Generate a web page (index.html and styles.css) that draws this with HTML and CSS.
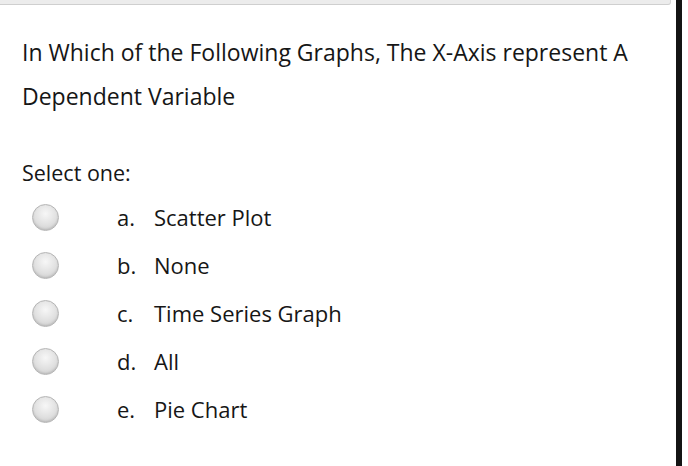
FILE: index.html
```html
<!DOCTYPE html>
<html>
<head>
<meta charset="utf-8">
<link rel="stylesheet" href="styles.css">
</head>
<body>
<div class="page">
  <div class="main">
    <div class="topbar"></div>
    <div class="content">
      <p class="question">In Which of the Following Graphs, The X-Axis represent A Dependent Variable</p>
      <p class="prompt">Select one:</p>
      <ul class="answers">
        <li class="answer"><span class="radio"></span><span class="letter">a.</span><span class="label">Scatter Plot</span></li>
        <li class="answer"><span class="radio"></span><span class="letter">b.</span><span class="label">None</span></li>
        <li class="answer"><span class="radio"></span><span class="letter">c.</span><span class="label">Time Series Graph</span></li>
        <li class="answer"><span class="radio"></span><span class="letter">d.</span><span class="label">All</span></li>
        <li class="answer"><span class="radio"></span><span class="letter">e.</span><span class="label">Pie Chart</span></li>
      </ul>
    </div>
  </div>
  <div class="rule"></div>
</div>
</body>
</html>
```

FILE: styles.css
```css
* { box-sizing: border-box; }
html, body {
  margin: 0;
  padding: 0;
  background: #fff;
}
body {
  font-family: "Open Sans", "Noto Sans", sans-serif;
  color: #161616;
  height: 466px;
  overflow: hidden;
}
.page {
  display: flex;
  width: 100%;
  height: 466px;
  padding-right: 6px;
}
.main {
  flex: 1 1 auto;
  min-width: 0;
  display: flex;
  flex-direction: column;
}
.topbar {
  height: 5px;
  margin-right: 5px;
  background: #ececec;
  border-bottom: 1px solid #cfcfcf;
  border-right: 1px solid #d6d6d6;
  border-bottom-right-radius: 3px;
}
.rule {
  flex: none;
  width: 6px;
  background: #141414;
}
.content {
  padding-left: 22px;
}
.question {
  margin: 25px 0 0;
  font-size: 23px;
  line-height: 44px;
  max-width: 640px;
}
.prompt {
  margin: 40px 0 0;
  font-size: 21.5px;
  line-height: 30px;
}
.answers {
  list-style: none;
  margin: 5px 0 0;
  padding: 0;
}
.answer {
  display: flex;
  align-items: center;
  height: 48px;
  font-size: 22px;
}
.radio {
  flex: none;
  width: 27px;
  height: 27px;
  border-radius: 50%;
  margin-left: 10px;
  border: 1px solid #b5b5b5;
  background: radial-gradient(circle at 50% 35%, #f7f7f7 0%, #e0e0e0 55%, #c6c6c6 100%);
  box-shadow: inset 0 -1px 2px rgba(0,0,0,0.12);
}
.letter {
  margin-left: 58px;
  width: 37px;
}
```
